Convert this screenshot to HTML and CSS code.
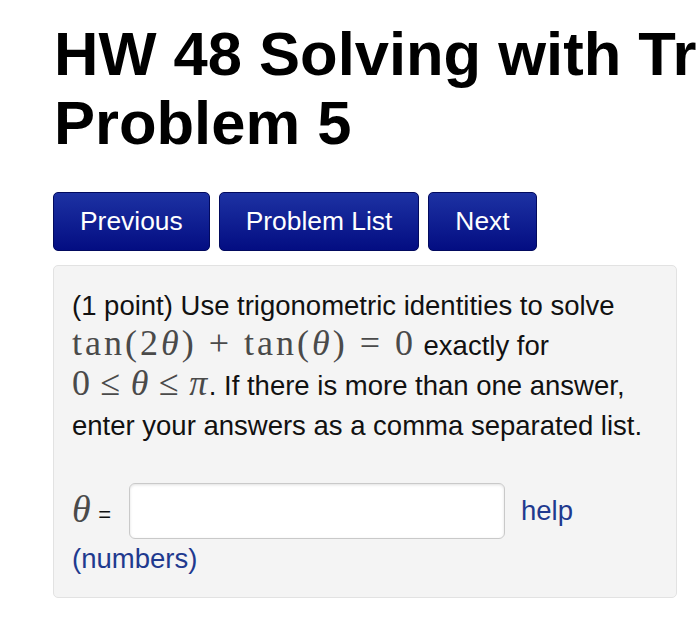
FILE: index.html
```html
<!DOCTYPE html>
<html lang="en">
<head>
    <meta charset="UTF-8">
    <meta name="viewport" content="width=device-width, initial-scale=1.0">
    <title>HW 48 Solving with Trig Identities: Problem 5</title>
    <link rel="stylesheet" href="styles.css">
</head>
<body>
    <div class="page">
        <h1 class="title">
            <span class="title-line">HW 48 Solving with Trig Identities</span>
            <span class="title-line">Problem 5</span>
        </h1>

        <div class="nav-buttons">
            <a class="nav-btn" href="#">Previous</a>
            <a class="nav-btn" href="#">Problem List</a>
            <a class="nav-btn" href="#">Next</a>
        </div>

        <div class="problem">
            <p class="problem-text">
                (1 point) Use trigonometric identities to solve<br>
                <span class="math wide">tan(2<i>θ</i>)<span class="op">+</span>tan(<i>θ</i>)<span class="op">=</span>0</span> exactly for<br>
                <span class="math">0<span class="op">≤</span><i>θ</i><span class="op">≤</span><i>π</i></span>. If there is more than one answer,<br>
                enter your answers as a comma separated list.
            </p>

            <div class="answer-row">
                <span class="answer-label"><span class="math var"><i>θ</i></span> =</span>
                <input class="answer-input" type="text">
                <a class="help-link" href="#">help</a>
            </div>
            <a class="help-link numbers" href="#">(numbers)</a>
        </div>
    </div>
</body>
</html>
```

FILE: styles.css
```css
html, body {
    margin: 0;
    padding: 0;
    overflow: hidden;
}
body {
    font-family: "Liberation Sans", Arial, Helvetica, sans-serif;
    background-color: #ffffff;
    color: #111;
}
.page {
    padding: 19px 0 0 53px;
}
.title {
    font-size: 61.5px;
    font-weight: bold;
    line-height: 69px;
    margin: 0 0 35px 1px;
    color: #000;
    white-space: nowrap;
}
.title-line {
    display: block;
}
.nav-buttons {
    display: flex;
    gap: 9px;
    margin-bottom: 14px;
}
.nav-btn {
    display: block;
    height: 57px;
    line-height: 57px;
    padding: 0 26px;
    font-size: 26.4px;
    color: #ffffff;
    text-decoration: none;
    background: linear-gradient(#1d32a3, #030d82);
    border: 1px solid #020a5e;
    border-radius: 5px;
}
.problem {
    width: 586px;
    background-color: #f4f4f4;
    border: 1px solid #e2e2e2;
    border-radius: 5px;
    padding: 20px 18px 22px 18px;
}
.problem-text {
    font-size: 27.5px;
    line-height: 40px;
    margin: 0 0 37px 0;
    white-space: nowrap;
}
.math {
    font-family: "Liberation Serif", "DejaVu Serif", serif;
    font-size: 36px;
    line-height: 30px;
    letter-spacing: 1.5px;
    color: #4a4a4a;
}
.math i {
    font-style: italic;
}
.op {
    margin: 0 9px;
}
.math.wide {
    letter-spacing: 3px;
}
.math.wide .op {
    margin: 0 12px;
}
.answer-row {
    display: flex;
    align-items: center;
}
.answer-label {
    font-size: 22px;
    width: 57px;
}
.math.var {
    font-size: 38px;
}
.answer-input {
    width: 376px;
    height: 56px;
    box-sizing: border-box;
    border: 1px solid #c9c9c9;
    border-radius: 6px;
    box-shadow: inset 0 1px 3px rgba(0,0,0,0.12);
    background: #fff;
    margin: 0;
}
.help-link {
    font-size: 27.5px;
    color: #1f3a8f;
    text-decoration: none;
    margin-left: 16px;
}
.help-link.numbers {
    display: block;
    margin: 4px 0 0 0;
}
```
